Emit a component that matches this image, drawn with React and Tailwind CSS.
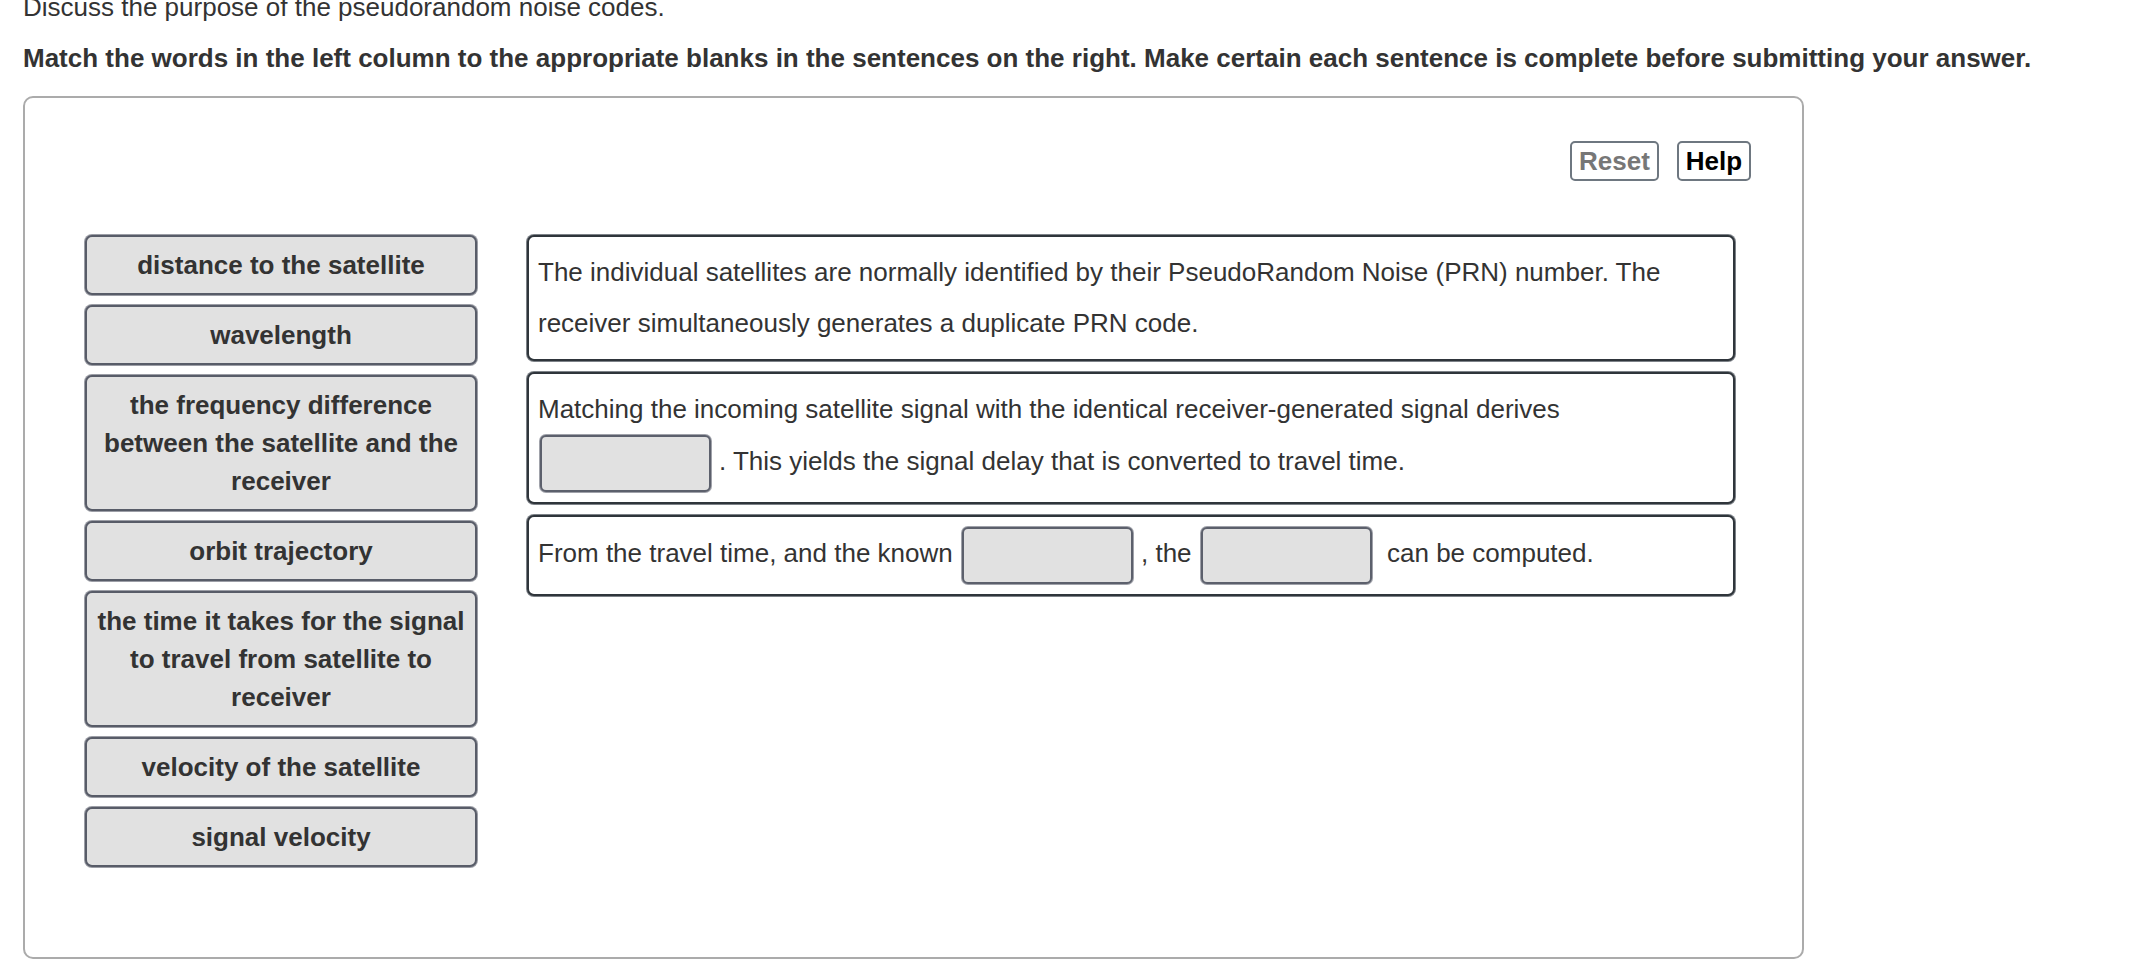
import React from "react";

const words = [
  "distance to the satellite",
  "wavelength",
  "the frequency difference between the satellite and the receiver",
  "orbit trajectory",
  "the time it takes for the signal to travel from satellite to receiver",
  "velocity of the satellite",
  "signal velocity",
];

function WordTile({ label }) {
  return (
    <div className="flex min-h-[60px] items-center justify-center rounded-[7px] border-2 border-[#585c68] bg-[#e1e1e1] px-[6px] py-[9px] text-center font-bold leading-[38px] text-[#333] shadow-[0_0_0_1px_#9c9ea6]">
      {label}
    </div>
  );
}

function Blank() {
  return (
    <span className="ml-[2px] mr-[8px] inline-block h-[57px] w-[171px] rounded-[6px] border-2 border-[#5c606c] bg-[#e1e1e1] align-middle shadow-[0_0_0_1px_#a0a2aa]" />
  );
}

function Sentence({ children }) {
  return (
    <div className="rounded-[7px] border-2 border-[#2f353b] bg-white px-[9px] py-[10px] leading-[51px] text-[#333] shadow-[0_0_0_1px_#7d8288]">
      {children}
    </div>
  );
}

export default function App() {
  return (
    <div
      className="min-h-screen overflow-hidden bg-white pl-[23px] text-[26px] text-[#333]"
      style={{ fontFamily: '"Liberation Sans", Arial, Helvetica, sans-serif' }}
    >
      <p className="mt-[-9px] leading-[32px]">Discuss the purpose of the pseudorandom noise codes.</p>
      <p className="mt-[19px] font-bold leading-[32px]">
        Match the words in the left column to the appropriate blanks in the sentences on the right. Make certain each sentence is complete before submitting your answer.
      </p>

      <div className="mt-[22px] h-[863px] w-[1781px] rounded-[10px] border-2 border-[#ababab]">
        <div className="flex justify-end gap-[18px] pr-[51px] pt-[43px]">
          <button className="h-[40px] w-[89px] rounded-[5px] border-2 border-[#6e7780] font-bold leading-none text-[#777]">
            Reset
          </button>
          <button className="h-[40px] w-[74px] rounded-[5px] border-2 border-[#6e7780] font-bold leading-none text-black">
            Help
          </button>
        </div>

        <div className="mt-[54px] flex gap-[50px] pl-[60px] pr-[67px]">
          <div className="flex w-[392px] shrink-0 flex-col gap-[10px]">
            {words.map((w) => (
              <WordTile key={w} label={w} />
            ))}
          </div>

          <div className="flex flex-1 flex-col gap-[11px]">
            <Sentence>
              The individual satellites are normally identified by their PseudoRandom Noise (PRN) number. The receiver simultaneously generates a duplicate PRN code.
            </Sentence>
            <Sentence>
              Matching the incoming satellite signal with the identical receiver-generated signal derives{" "}
              <Blank />. This yields the signal delay that is converted to travel time.
            </Sentence>
            <Sentence>
              From the travel time, and the known <Blank />, the <Blank /> can be computed.
            </Sentence>
          </div>
        </div>
      </div>
    </div>
  );
}
